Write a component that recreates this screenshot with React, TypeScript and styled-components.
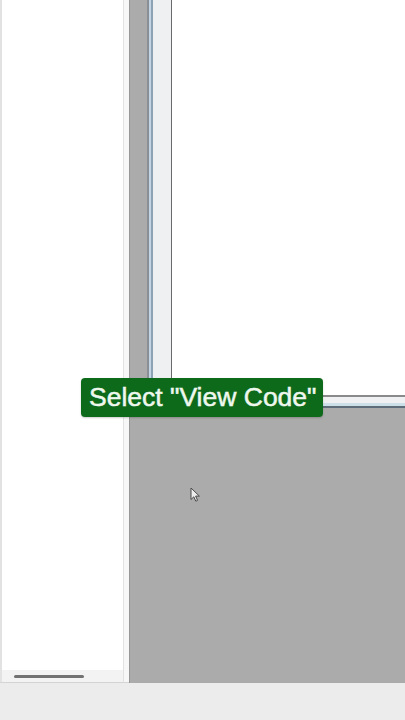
import styled, { createGlobalStyle } from 'styled-components'

const GlobalStyle = createGlobalStyle`
	html, body {
		margin: 0;
		padding: 0;
		background: #ececec;
	}
	body {
		font-family: 'Liberation Sans', Arial, sans-serif;
	}
`

export default function App() {
	return (
		<Page>
			<GlobalStyle />
			<Workarea>
				<LeftEdge />
				<Toolbox>
					<ScrollStrip>
						<ScrollThumb />
					</ScrollStrip>
				</Toolbox>
				<Splitter />
				<Designer>
					<FrameOuter>
						<FrameGlow>
							<FrameEdge>
								<FrameBand>
									<FormCanvas />
								</FrameBand>
							</FrameEdge>
						</FrameGlow>
					</FrameOuter>
				</Designer>
			</Workarea>
			<StatusBar />
			<Caption>Select "View Code"</Caption>
			<Cursor viewBox="0 0 12 16" width="12" height="16">
				<path
					d="M1 1 L1 12.5 L3.8 9.8 L5.8 14.2 L7.6 13.4 L5.6 9.1 L9.4 9.1 Z"
					fill="#fafafa"
					stroke="#3a3a3a"
					strokeWidth="1"
					strokeLinejoin="round"
				/>
			</Cursor>
		</Page>
	)
}

const Page = styled.div`
	position: relative;
	width: 405px;
	height: 720px;
	overflow: hidden;
	display: flex;
	flex-direction: column;
	background: #ececec;
`

const Workarea = styled.div`
	height: 683px;
	display: flex;
	flex-shrink: 0;
`

const LeftEdge = styled.div`
	width: 2px;
	background: #e2e2e2;
	border-bottom: 1px solid #d6d6d6;
`

const Toolbox = styled.div`
	width: 121px;
	background: #ffffff;
	display: flex;
	flex-direction: column;
	justify-content: flex-end;
`

const ScrollStrip = styled.div`
	height: 12px;
	background: #f3f3f3;
	border-bottom: 1px solid #d4d4d4;
	display: flex;
	align-items: center;
	padding-left: 12px;
`

const ScrollThumb = styled.div`
	width: 70px;
	height: 3px;
	border-radius: 2px;
	background: #737373;
`

const Splitter = styled.div`
	width: 5px;
	background: #f7f7f7;
	border-left: 1px solid #e2e2e2;
	border-bottom: 1px solid #d4d4d4;
`

const Designer = styled.div`
	flex: 1;
	background: #ababab;
	border-left: 1px solid #969696;
	padding-left: 17px;
`

const FrameOuter = styled.div`
	border-left: 2px solid #8a8f95;
	border-bottom: 2px solid #5d6c79;
`

const FrameGlow = styled.div`
	border-left: 2px solid #c2d5e5;
	border-bottom: 3px solid #cde0ea;
`

const FrameEdge = styled.div`
	border-left: 2px solid #8da2b5;
`

const FrameBand = styled.div`
	background: #eef0f2;
	padding: 0 0 6px 18px;
`

const FormCanvas = styled.div`
	height: 395px;
	background: #ffffff;
	border-left: 1px solid #6a6a6a;
	border-bottom: 2px solid #8a8a8a;
`

const StatusBar = styled.div`
	flex: 1;
	background: #ececec;
`

const Caption = styled.div`
	position: absolute;
	left: 81px;
	top: 378px;
	width: 242px;
	height: 39px;
	box-sizing: border-box;
	padding-left: 8px;
	display: flex;
	align-items: center;
	background: #0e6a1b;
	border-radius: 4px;
	color: #eef8ee;
	font-family: 'Liberation Sans', Arial, sans-serif;
	font-size: 26.5px;
	-webkit-text-stroke: 0.5px #eef8ee;
	white-space: nowrap;
	box-shadow: 0 1px 2px rgba(0, 0, 0, 0.2);
`

const Cursor = styled.svg`
	position: absolute;
	left: 190px;
	top: 487px;
	opacity: 0.85;
`
